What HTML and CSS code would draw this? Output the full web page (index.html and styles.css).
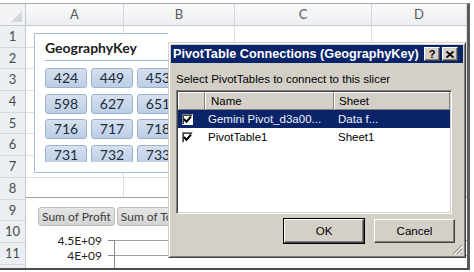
FILE: index.html
```html
<!DOCTYPE html>
<html lang="en">
<head>
    <meta charset="UTF-8">
    <title>PivotTable Connections</title>
    <link rel="stylesheet" href="styles.css">
</head>
<body>
    <div class="frame">
        <div class="sheet">
            <div class="corner"></div><div class="col">A</div><div class="col">B</div><div class="col">C</div><div class="col">D</div>
            <div class="rh">1</div><div class="cell"></div><div class="cell"></div><div class="cell"></div><div class="cell"></div>
            <div class="rh">2</div><div class="cell"></div><div class="cell"></div><div class="cell"></div><div class="cell"></div>
            <div class="rh">3</div><div class="cell"></div><div class="cell"></div><div class="cell"></div><div class="cell"></div>
            <div class="rh">4</div><div class="cell"></div><div class="cell"></div><div class="cell"></div><div class="cell"></div>
            <div class="rh">5</div><div class="cell"></div><div class="cell"></div><div class="cell"></div><div class="cell"></div>
            <div class="rh">6</div><div class="cell"></div><div class="cell"></div><div class="cell"></div><div class="cell"></div>
            <div class="rh">7</div><div class="cell"></div><div class="cell"></div><div class="cell"></div><div class="cell"></div>
            <div class="rh">8</div><div class="cell"></div><div class="cell"></div><div class="cell"></div><div class="cell"></div>
            <div class="rh">9</div><div class="cell"></div><div class="cell"></div><div class="cell"></div><div class="cell"></div>
            <div class="rh">10</div><div class="cell"></div><div class="cell"></div><div class="cell"></div><div class="cell"></div>
            <div class="rh">11</div><div class="cell"></div><div class="cell"></div><div class="cell"></div><div class="cell"></div>
            <div class="rh"></div><div class="cell"></div><div class="cell"></div><div class="cell"></div><div class="cell"></div>
        </div>

        <!-- slicer (right part hidden behind the dialog) -->
        <div class="slicer">
            <div class="slicer-title">GeographyKey</div>
            <div class="items">
                <span>424</span><span>449</span><span>453</span>
                <span>598</span><span>627</span><span>651</span>
                <span>716</span><span>717</span><span>718</span>
                <span>731</span><span>732</span><span>733</span>
            </div>
        </div>

        <!-- pivot chart -->
        <div class="chart">
            <div class="tabs">
                <span class="tab">Sum of Profit</span>
                <span class="tab">Sum of Total</span>
            </div>
            <div class="axis">
                <div class="labels"><span>4.5E+09</span><span>4E+09</span></div>
                <div class="ticks"></div>
                <div class="plot"></div>
            </div>
        </div>

        <!-- dialog -->
        <div class="dialog">
            <div class="titlebar">
                <span class="title">PivotTable Connections (GeographyKey)</span>
                <span class="tb-btn">?</span>
                <span class="tb-btn">
                    <svg width="8" height="7" viewBox="0 0 8 7"><path d="M0.5 0.5 L7.5 6.5 M7.5 0.5 L0.5 6.5" stroke="#000" stroke-width="1.8"/></svg>
                </span>
            </div>
            <div class="dlg-body">
                <p class="prompt">Select PivotTables to connect to this slicer</p>
                <div class="listbox">
                    <div class="lrow lhead">
                        <span class="c-chk"></span><span class="c-name">Name</span><span class="c-sheet">Sheet</span>
                    </div>
                    <div class="lrow selected">
                        <span class="c-chk"><i class="chk"><svg width="9" height="9" viewBox="0 0 9 9"><path d="M1 4 L3.5 6.8 L8 1.5" stroke="#000" stroke-width="2" fill="none"/></svg></i></span>
                        <span class="c-name">Gemini Pivot_d3a00...</span><span class="c-sheet">Data f...</span>
                    </div>
                    <div class="lrow">
                        <span class="c-chk"><i class="chk"><svg width="9" height="9" viewBox="0 0 9 9"><path d="M1 4 L3.5 6.8 L8 1.5" stroke="#000" stroke-width="2" fill="none"/></svg></i></span>
                        <span class="c-name">PivotTable1</span><span class="c-sheet">Sheet1</span>
                    </div>
                </div>
                <div class="buttons">
                    <button class="btn default">OK</button>
                    <button class="btn">Cancel</button>
                </div>
                <svg class="grip" width="11" height="11" viewBox="0 0 11 11">
                    <path d="M10 1 L1 10 M10 5 L5 10 M10 9 L9 10" stroke="#808080" stroke-width="1"/>
                    <path d="M11 2 L2 11 M11 6 L6 11" stroke="#fff" stroke-width="1"/>
                </svg>
            </div>
        </div>
    </div>
</body>
</html>
```

FILE: styles.css
```css
*{
    margin: 0;
    padding: 0;
    box-sizing: border-box;
}
body{
    background: #fff;
    font-family: "Liberation Sans", Arial, sans-serif;
}
.frame{
    position: relative;
    width: 470px;
    height: 267px;
    margin-top: 3px;
    border-top: 1px solid #a9a9a9;
    border-right: 3px solid #5b5b5b;
    border-bottom: 2px solid #4c4c4c;
    overflow: hidden;
}

/* worksheet grid */
.sheet{
    display: grid;
    grid-template-columns: 26px 98px 111px 137px 95px;
    grid-template-rows: 22px repeat(12, 21.7px);
    font-family: Lato, sans-serif;
    font-size: 13px;
}
.corner{
    position: relative;
    background: #f1f3f5;
    border-right: 1px solid #c5cad2;
    border-bottom: 1px solid #c5cad2;
}
.corner::after{
    content: "";
    position: absolute;
    right: 3px;
    bottom: 3px;
    border-left: 11px solid transparent;
    border-bottom: 11px solid #d3d6da;
}
.col{
    background: linear-gradient(#f9fafb, #eceef1);
    border-right: 1px solid #d4d8de;
    border-bottom: 1px solid #c3c8d0;
    text-align: center;
    line-height: 21px;
    color: #5a5a5a;
}
.rh{
    background: #eceff3;
    border-right: 1px solid #c3c8d0;
    border-bottom: 1px solid #d4d8de;
    text-align: center;
    line-height: 21px;
    color: #4a4a4a;
}
.cell{
    border-right: 1px solid #dcdee2;
    border-bottom: 1px solid #dcdee2;
}

/* slicer */
.slicer{
    position: absolute;
    left: 34px;
    top: 29px;
    width: 134px;
    height: 140px;
    border: 1px solid #a9bcd7;
    border-right: 0;
    background: #fff;
    padding-left: 10px;
    overflow: hidden;
}
.slicer-title{
    height: 27px;
    padding-top: 5px;
    line-height: 18px;
    font-family: Lato, sans-serif;
    font-weight: bold;
    font-size: 14px;
    color: #1c1c1c;
    border-bottom: 1px solid #9fb4d2;
    white-space: nowrap;
}
.items{
    margin-top: 7px;
    height: 94px;
    overflow: hidden;
    display: grid;
    grid-template-columns: repeat(3, 42px);
    grid-auto-rows: 20px;
    column-gap: 4px;
    row-gap: 5.7px;
}
.items span{
    border: 1px solid #9db1cd;
    border-radius: 3px;
    background: linear-gradient(#d6e1f0, #bccde5);
    text-align: center;
    line-height: 18px;
    font-family: Lato, sans-serif;
    font-size: 14px;
    color: #222c38;
}

/* chart */
.chart{
    position: absolute;
    left: 26px;
    top: 193px;
    right: 0;
    bottom: 0;
    background: #fff;
    border-top: 1px solid #a0a0a0;
    padding: 9px 0 0 12px;
}
.tabs{
    display: flex;
    gap: 2px;
    width: 130px;
    overflow: hidden;
}
.tab{
    height: 19px;
    padding: 0 3px;
    line-height: 17px;
    border: 1px solid #bdbdbd;
    border-radius: 3px;
    background: linear-gradient(#e6e6e6, #d3d3d3);
    font-family: Lato, sans-serif;
    font-size: 12px;
    color: #404040;
    white-space: nowrap;
    flex-shrink: 0;
}
.axis{
    display: flex;
    margin-top: 7px;
    height: 40px;
}
.labels{
    width: 64px;
    display: flex;
    flex-direction: column;
    align-items: flex-end;
    font-family: Lato, sans-serif;
    font-size: 12px;
    line-height: 15px;
    color: #222;
}
.ticks{
    width: 6px;
    margin: 7px 0 0 6px;
    background: repeating-linear-gradient(to bottom, #8c8c8c 0 1px, transparent 1px 15px);
}
.plot{
    flex: 1;
    margin-top: 7px;
    border-left: 1px solid #8c8c8c;
    background: repeating-linear-gradient(to bottom, #a0a0a0 0 1px, transparent 1px 15px);
}

/* dialog */
.dialog{
    position: absolute;
    left: 168px;
    top: 38px;
    width: 298px;
    height: 216px;
    background: #d4d0c8;
    border: 1px solid;
    border-color: #d4d0c8 #404040 #404040 #d4d0c8;
    box-shadow: inset 1px 1px #fff, inset -1px -1px #808080;
    padding: 2px;
    font-family: "Liberation Sans", Arial, sans-serif;
    font-size: 11.5px;
    color: #000;
}
.titlebar{
    height: 18px;
    background: #0a246a;
    display: flex;
    align-items: center;
    padding: 0 5px 0 2px;
    gap: 2px;
}
.title{
    flex: 1;
    color: #fff;
    font-weight: bold;
    font-size: 12.7px;
    white-space: nowrap;
}
.tb-btn{
    width: 16px;
    height: 14px;
    background: #d4d0c8;
    border: 1px solid;
    border-color: #fff #404040 #404040 #fff;
    box-shadow: inset -1px -1px #808080;
    display: flex;
    align-items: center;
    justify-content: center;
    font-weight: bold;
    font-size: 11px;
    line-height: 1;
}
.dlg-body{
    position: relative;
    padding: 8px 0 0 5px;
    height: 192px;
}
.prompt{
    height: 17px;
    line-height: 17px;
    margin-bottom: 2px;
}
.listbox{
    width: 276px;
    height: 124px;
    background: #fff;
    border: 1px solid;
    border-color: #808080 #fff #fff #808080;
    box-shadow: inset 1px 1px #404040, inset -1px -1px #d4d0c8;
    padding: 1px;
}
.lrow{
    display: flex;
    height: 18px;
    align-items: center;
}
.lhead span{
    height: 18px;
    line-height: 16px;
    background: #d4d0c8;
    border: 1px solid;
    border-color: #fff #808080 #808080 #fff;
}
.c-chk{
    width: 27px;
    padding-left: 4px;
    display: flex;
    align-items: center;
}
.c-name{
    width: 129px;
    padding-left: 3px;
    white-space: nowrap;
}
.c-sheet{
    flex: 1;
    padding-left: 4px;
    white-space: nowrap;
}
.lhead .c-name{
    padding-left: 5px;
}
.selected{
    background: #0a246a;
    color: #f0f0f5;
}
.chk{
    width: 11px;
    height: 11px;
    background: #fff;
    border: 1px solid;
    border-color: #808080 #fff #fff #808080;
    box-shadow: inset 1px 1px #404040;
    display: flex;
    align-items: center;
    justify-content: center;
}
.buttons{
    display: flex;
    justify-content: flex-end;
    gap: 10px;
    margin-top: 5px;
    padding-right: 8px;
}
.btn{
    width: 81px;
    height: 24px;
    background: #d4d0c8;
    border: 1px solid;
    border-color: #fff #404040 #404040 #fff;
    box-shadow: inset -1px -1px #808080;
    font-family: "Liberation Sans", Arial, sans-serif;
    font-size: 11.5px;
    color: #000;
}
.btn.default{
    width: 80px;
    outline: 1px solid #000;
    outline-offset: 0;
}
.grip{
    position: absolute;
    right: 0;
    bottom: 0;
}
```
